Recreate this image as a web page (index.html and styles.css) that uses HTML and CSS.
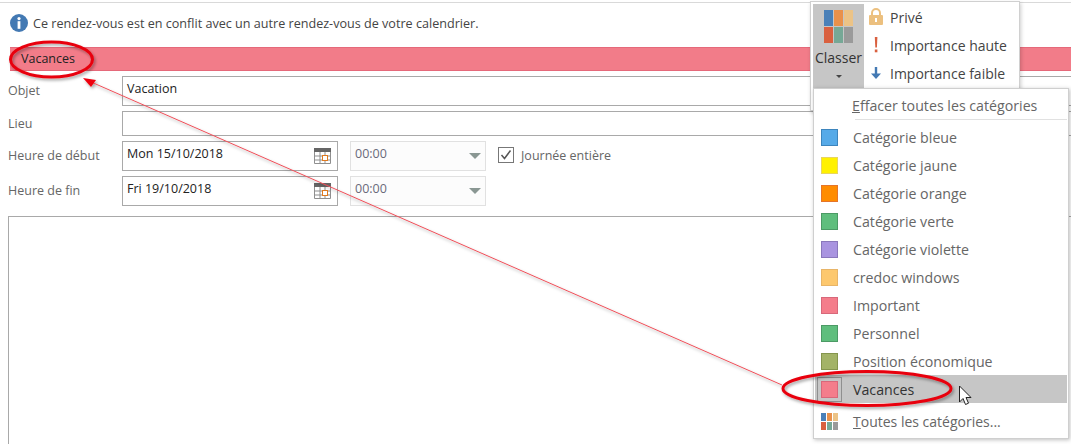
FILE: index.html
```html
<!DOCTYPE html>
<html lang="fr">
<head>
  <meta charset="UTF-8" />
  <title>Vacation - Rendez-vous</title>
  <link rel="stylesheet" href="styles.css">
</head>
<body>
  <div class="form">
    <div class="infobar">
      <svg class="info-icon" width="18" height="18" viewBox="0 0 18 18">
        <circle cx="9" cy="9" r="9" fill="#4379b3"/>
        <circle cx="9" cy="4.6" r="1.6" fill="#fff"/>
        <rect x="7.6" y="7.2" width="2.8" height="7.6" fill="#fff"/>
      </svg>
      <span>Ce rendez-vous est en conflit avec un autre rendez-vous de votre calendrier.</span>
    </div>
    <div class="catbar">Vacances</div>

    <div class="fields">
      <label class="field-label">Objet</label>
      <div class="input">Vacation</div>

      <label class="field-label">Lieu</label>
      <div class="input"></div>

      <label class="field-label">Heure de début</label>
      <div class="date-row">
        <div class="input date">
          Mon 15/10/2018
          <svg class="cal-icon" width="17" height="16" viewBox="0 0 17 16">
            <rect x="0" y="0" width="17" height="4" fill="#666"/>
            <path d="M.5 4v11.5h16V4M6 4v11M11 4v11M1 8h15M1 12h15" fill="none" stroke="#8f8f8f"/>
            <rect x="8.5" y="7.5" width="5" height="5" fill="#fff" stroke="#e07a1f"/>
          </svg>
        </div>
        <div class="time">00:00<span class="caret"></span></div>
        <span class="check">
          <svg width="16" height="16" viewBox="0 0 16 16">
            <rect x=".5" y=".5" width="15" height="15" fill="#fff" stroke="#777"/>
            <path d="M3.5 8l3 3.5 6-8" fill="none" stroke="#555" stroke-width="1.5"/>
          </svg>
          Journée entière
        </span>
      </div>

      <label class="field-label">Heure de fin</label>
      <div class="date-row">
        <div class="input date">
          Fri 19/10/2018
          <svg class="cal-icon" width="17" height="16" viewBox="0 0 17 16">
            <rect x="0" y="0" width="17" height="4" fill="#666"/>
            <path d="M.5 4v11.5h16V4M6 4v11M11 4v11M1 8h15M1 12h15" fill="none" stroke="#8f8f8f"/>
            <rect x="8.5" y="7.5" width="5" height="5" fill="#fff" stroke="#e07a1f"/>
          </svg>
        </div>
        <div class="time">00:00<span class="caret"></span></div>
      </div>
    </div>

    <div class="notes"></div>
  </div>

  <!-- popup du ruban -->
  <div class="ribbon-pop">
    <div class="classer">
      <div class="tiles">
        <i class="t1"></i><i class="t2"></i><i class="t3"></i>
        <i class="t4"></i><i class="t5"></i><i class="t6"></i>
      </div>
      <span>Classer</span>
      <span class="mini-caret"></span>
    </div>
    <div class="ribbon-list">
      <div class="ribbon-item">
        <svg width="16" height="18" viewBox="0 0 16 18">
          <path d="M4 8V5a4 4 0 0 1 8 0v3" fill="none" stroke="#ecc07f" stroke-width="2"/>
          <rect x="1" y="7" width="14" height="10" rx="1" fill="#ecc07f"/>
          <rect x="7" y="10" width="2" height="4" fill="#fff"/>
        </svg>
        Privé
      </div>
      <div class="ribbon-item">
        <svg width="16" height="18" viewBox="0 0 16 18">
          <path d="M6.8 1h2.6l-.5 10.5H7.300z" fill="#d9603f"/>
          <rect x="6.800" y="13.500" width="2.600" height="2.800" fill="#d9603f"/>
        </svg>
        Importance haute
      </div>
      <div class="ribbon-item">
        <svg width="16" height="18" viewBox="0 0 16 18">
          <path d="M6.800 3h2.400v6.500H13L8 15 3 9.500h3.800z" fill="#4379b3"/>
        </svg>
        Importance faible
      </div>
    </div>
  </div>

  <!-- menu des catégories -->
  <div class="menu">
    <div class="menu-item clear"><span class="label"><u>E</u>ffacer toutes les catégories</span></div>
    <div class="menu-sep"></div>
    <div class="menu-item"><i class="swatch" style="background:#56aae8;border-color:#3d85bd"></i><span class="label">Catégorie bleue</span></div>
    <div class="menu-item"><i class="swatch" style="background:#fff100;border-color:#e8d560"></i><span class="label">Catégorie jaune</span></div>
    <div class="menu-item"><i class="swatch" style="background:#ff8c00;border-color:#e5752a"></i><span class="label">Catégorie orange</span></div>
    <div class="menu-item"><i class="swatch" style="background:#5fbe7d;border-color:#4c9a65"></i><span class="label">Catégorie verte</span></div>
    <div class="menu-item"><i class="swatch" style="background:#a994e0;border-color:#8a78bb"></i><span class="label">Catégorie violette</span></div>
    <div class="menu-item"><i class="swatch" style="background:#fdc86e;border-color:#e8b568"></i><span class="label">credoc windows</span></div>
    <div class="menu-item"><i class="swatch" style="background:#f47d8b;border-color:#d8687a"></i><span class="label">Important</span></div>
    <div class="menu-item"><i class="swatch" style="background:#5fbe7d;border-color:#4c9a65"></i><span class="label">Personnel</span></div>
    <div class="menu-item"><i class="swatch" style="background:#a3b367;border-color:#85954d"></i><span class="label">Position économique</span></div>
    <div class="menu-item active"><i class="swatch" style="background:#f47d8b;border-color:#d8687a"></i><span class="label">Vacances</span></div>
    <div class="menu-item all">
      <div class="tiles small">
        <i class="t1"></i><i class="t2"></i><i class="t3"></i>
        <i class="t4"></i><i class="t5"></i><i class="t6"></i>
      </div>
      <span class="label"><u>T</u>outes les catégories...</span>
    </div>
  </div>

  <!-- annotations -->
  <svg class="annot" width="1071" height="444" viewBox="0 0 1071 444">
    <defs>
      <filter id="ombre" x="-10%" y="-30%" width="120%" height="170%">
        <feDropShadow dx="1.500" dy="2" stdDeviation="1.500" flood-color="#000" flood-opacity=".35"/>
      </filter>
    </defs>
    <g filter="url(#ombre)">
      <ellipse cx="51.500" cy="59.500" rx="41" ry="17.500" fill="none" stroke="#e8000f" stroke-width="3"/>
      <path d="M90 81.500 L782 385" fill="none" stroke="#f0505a" stroke-width="1"/>
      <path d="M83 78 L96 80 L91 87z" fill="#ee0010"/>
      <ellipse cx="867" cy="388.500" rx="84" ry="17" fill="none" stroke="#e8000f" stroke-width="3"/>
    </g>
    <path d="M959.500 386v16l3.500-3.500 2.500 6 3-1.300-2.500-5.700h5z" fill="#fff" stroke="#222" stroke-width="1"/>
  </svg>
</body>
</html>
```

FILE: styles.css
```css
* {
  box-sizing: border-box;
}
html, body {
  margin: 0;
  height: 100%;
}
body {
  position: relative;
  width: 1071px;
  height: 444px;
  overflow: hidden;
  background: #fff;
  font-family: "Open Sans", sans-serif;
  font-size: 12.5px;
  color: #444;
}
.form {
  display: flex;
  flex-direction: column;
  height: 100%;
  padding-top: 2px;
}
.infobar {
  flex: none;
  display: flex;
  align-items: center;
  gap: 5px;
  height: 45px;
  padding: 0 0 4px 10px;
  border-top: 1px solid #d9d9d9;
  color: #444;
  font-size: 12.6px;
}
.catbar {
  flex: none;
  height: 24px;
  margin-left: 10px;
  padding: 2px 0 0 11px;
  background: #f27c89;
  border-top: 1px solid #e5697a;
  border-bottom: 1px solid #e5697a;
  color: #222;
}
.fields {
  display: grid;
  grid-template-columns: 114px 1fr;
  grid-template-rows: 30px 25px 30px 30px;
  gap: 5px 0;
  margin-top: 5px;
  padding-left: 8px;
}
.field-label {
  align-self: center;
  padding-bottom: 1px;
  color: #666;
}
.input {
  position: relative;
  border: 1px solid #a9a9a9;
  border-right: 0;
  padding: 3px 4px 0;
  background: #fff;
  color: #222;
}
.date-row {
  display: flex;
  align-items: stretch;
  gap: 12px;
}
.input.date {
  width: 216px;
  border-right: 1px solid #a9a9a9;
}
.cal-icon {
  position: absolute;
  right: 6px;
  top: 6px;
}
.time {
  position: relative;
  width: 136px;
  border: 1px solid #e1e1e1;
  background: #fcfcfc;
  padding: 3px 4px 0;
  color: #6a6a7a;
}
.caret {
  position: absolute;
  right: 4px;
  top: 11px;
  border-left: 6px solid transparent;
  border-right: 6px solid transparent;
  border-top: 6px solid #8a9793;
}
.check {
  display: flex;
  align-items: center;
  gap: 7px;
  padding-bottom: 2px;
  color: #666;
}
.notes {
  flex: 1;
  margin: 10px 0 0 8px;
  border: 1px solid #a9a9a9;
  border-bottom: 0;
  border-right: 0;
}

.ribbon-pop {
  position: absolute;
  left: 810px;
  top: 1px;
  width: 210px;
  height: 110px;
  display: flex;
  padding: 2px;
  background: #fff;
  border: 1px solid #d0d0d0;
  box-shadow: 1px 2px 4px rgba(0,0,0,0.2);
  color: #444;
  font-size: 14px;
}
.classer {
  display: flex;
  flex-direction: column;
  align-items: center;
  width: 51px;
  height: 85px;
  padding-top: 6px;
  background: #c6c6c6;
  color: #333;
}
.classer .tiles {
  margin-bottom: 5px;
}
.tiles {
  display: grid;
  grid-template-columns: repeat(3, 9px);
  grid-template-rows: repeat(2, 16px);
  gap: 1px;
}
.tiles.small {
  grid-template-columns: repeat(3, 5px);
  grid-template-rows: repeat(2, 8px);
}
.t1 { background: #4a80b8; }
.t2 { background: #e9914b; }
.t3 { background: #ecc386; }
.t4 { background: #d9603f; }
.t5 { background: #76a896; }
.t6 { background: #9a9a9a; }
.mini-caret {
  margin-top: 8px;
  border-left: 3px solid transparent;
  border-right: 3px solid transparent;
  border-top: 3px solid #444;
}
.ribbon-list {
  margin-top: -1px;
}
.ribbon-item {
  display: flex;
  align-items: center;
  gap: 6px;
  height: 28px;
  padding-left: 4px;
}

.menu {
  position: absolute;
  left: 813px;
  top: 88px;
  width: 256px;
  height: 351px;
  padding: 2px 1px;
  background: #fff;
  border: 1px solid #cfcfcf;
  box-shadow: 1px 1px 4px rgba(0,0,0,0.25);
  font-size: 14.2px;
  color: #666;
}
.menu-item {
  display: flex;
  align-items: center;
  height: 28px;
  padding-left: 6px;
}
.menu-item .label {
  margin-left: 15px;
}
.menu-item.clear {
  padding-left: 22px;
}
.menu-sep {
  height: 1px;
  margin: 0 0 3px 40px;
  background: #e1e1e1;
}
.swatch {
  flex: none;
  width: 17px;
  height: 17px;
  border: 1px solid;
}
.menu-item.active {
  background: #c6c6c6;
  color: #333;
}
.menu-item.active .swatch {
  outline: 1px solid #8f8f8f;
  outline-offset: 3px;
}
.menu-item.all {
  height: 36px;
  font-size: 14px;
}
.menu-item.all .label {
  margin-left: 15px;
}
.annot {
  position: absolute;
  left: 0;
  top: 0;
  pointer-events: none;
}
```
